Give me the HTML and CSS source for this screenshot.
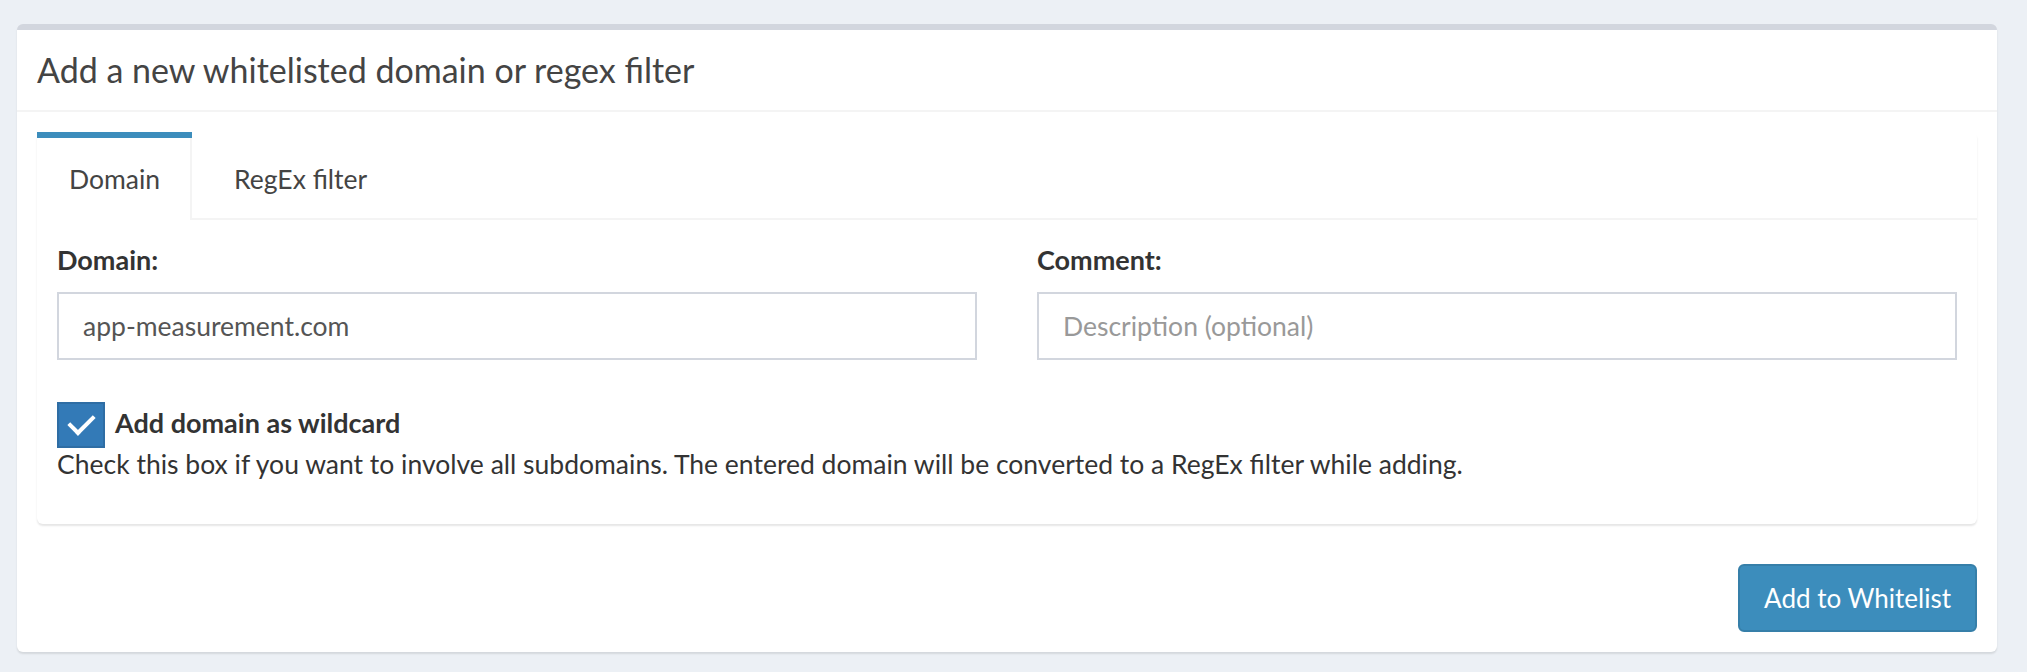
FILE: index.html
```html
<!DOCTYPE html>
<html lang="en">
<head>
  <meta charset="UTF-8">
  <meta name="viewport" content="width=device-width, initial-scale=1.0">
  <title>Pi-hole - Whitelist</title>
  <link rel="stylesheet" href="styles.css">
</head>
<body>
  <section class="content">
    <div class="box">
      <div class="box-header">
        <h3 class="box-title">Add a new whitelisted domain or regex filter</h3>
      </div>
      <div class="box-body">
        <div class="nav-tabs-custom">
          <ul class="nav-tabs">
            <li class="active"><a href="#tab_domain">Domain</a></li>
            <li><a href="#tab_regex">RegEx filter</a></li>
          </ul>
          <div class="tab-content">
            <div class="row">
              <div class="form-group">
                <label for="new_domain">Domain:</label>
                <input type="text" id="new_domain" class="form-control" value="app-measurement.com">
              </div>
              <div class="form-group">
                <label for="new_domain_comment">Comment:</label>
                <input type="text" id="new_domain_comment" class="form-control" placeholder="Description (optional)">
              </div>
            </div>
            <div class="icheck-primary">
              <input type="checkbox" id="wildcard_checkbox" checked>
              <label for="wildcard_checkbox">Add domain as wildcard</label>
            </div>
            <p class="help-text">Check this box if you want to involve all subdomains. The entered domain will be converted to a RegEx filter while adding.</p>
          </div>
        </div>
        <div class="btn-row">
          <button type="button" class="btn btn-primary">Add to Whitelist</button>
        </div>
      </div>
    </div>
  </section>
</body>
</html>
```

FILE: styles.css
```css
* {
  box-sizing: border-box;
}
body {
  margin: 0;
  background: #ecf0f5;
  font-family: "Source Sans Pro", Lato, "Noto Sans", sans-serif;
  font-size: 26.5px;
  line-height: 40px;
  color: #333;
}
.content {
  padding: 24px 30px 20px 17px;
}
.box {
  background: #fff;
  border-top: 6px solid #d2d6de;
  border-radius: 6px;
  box-shadow: 0 2px 2px rgba(0, 0, 0, 0.1);
}
.box-header {
  padding: 20px;
  border-bottom: 2px solid #f4f4f4;
}
.box-title {
  margin: 0;
  font-size: 34px;
  line-height: 40px;
  font-weight: normal;
  color: #444;
}
.box-body {
  padding: 20px;
}
.nav-tabs-custom {
  background: #fff;
  border-radius: 6px;
  box-shadow: 0 2px 2px rgba(0, 0, 0, 0.1);
  margin-bottom: 40px;
}
.nav-tabs {
  display: flex;
  margin: 0;
  padding: 0;
  list-style: none;
  border-bottom: 2px solid #f4f4f4;
}
.nav-tabs li {
  border-top: 6px solid transparent;
  margin-bottom: -2px;
  margin-right: 10px;
}
.nav-tabs li.active {
  border-top-color: #3c8dbc;
}
.nav-tabs a {
  display: block;
  padding: 21px 30px;
  line-height: 40px;
  color: #444;
  text-decoration: none;
  border-left: 2px solid transparent;
  border-right: 2px solid transparent;
}
.nav-tabs li.active a {
  background: #fff;
  border-right-color: #f4f4f4;
}
.tab-content {
  padding: 20px;
}
.row {
  display: grid;
  grid-template-columns: 1fr 1fr;
  column-gap: 60px;
}
.form-group {
  margin-bottom: 30px;
}
.form-group label {
  display: block;
  font-size: 27px;
  font-weight: bold;
  margin-bottom: 12px;
}
.form-control {
  display: block;
  width: 100%;
  height: 68px;
  padding: 12px 24px;
  border: 2px solid #d2d6de;
  border-radius: 0;
  font-family: inherit;
  font-size: 26.5px;
  color: #555;
  background: #fff;
}
.form-control::placeholder {
  color: #999;
}
.icheck-primary {
  position: relative;
  margin: 12px 0 0;
}
.icheck-primary input {
  position: absolute;
  left: 0;
  top: 0;
  margin: 0;
  opacity: 0;
}
.icheck-primary label {
  position: relative;
  display: inline-block;
  min-height: 42px;
  line-height: 42px;
  padding-left: 58px;
  font-size: 27px;
  font-weight: bold;
}
.icheck-primary label::before {
  content: "";
  position: absolute;
  left: 0;
  top: 0;
  width: 44px;
  height: 42px;
  background: #337ab7;
  border: 2px solid #2e6da4;
}
.icheck-primary label::after {
  content: "";
  position: absolute;
  left: 17px;
  top: 7px;
  width: 11px;
  height: 21px;
  border: solid #fff;
  border-width: 0 4px 4px 0;
  transform: rotate(45deg);
}
.help-text {
  margin: 0 0 20px;
}
.btn-row {
  display: flex;
  justify-content: flex-end;
}
.btn {
  padding: 12px 24px;
  font-family: inherit;
  font-size: 26px;
  line-height: 40px;
  border: 2px solid transparent;
  border-radius: 6px;
  cursor: pointer;
}
.btn-primary {
  background: #3c8dbc;
  border-color: #367fa9;
  color: #fff;
}
```
